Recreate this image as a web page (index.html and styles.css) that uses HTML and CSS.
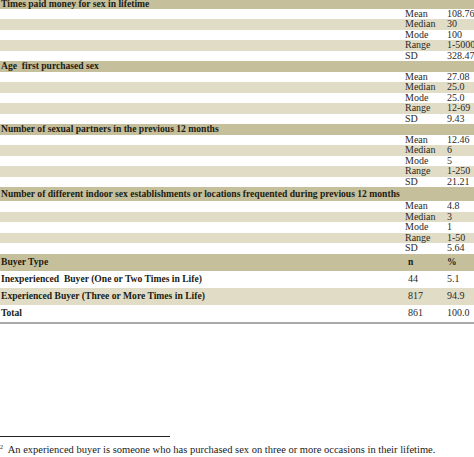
FILE: index.html
```html
<!DOCTYPE html>
<html>
<head>
<meta charset="utf-8">
<link rel="stylesheet" href="styles.css">
</head>
<body>
<div class="page">
  <div class="table">
    <div class="row head first"><span class="c1">Times paid money for sex in lifetime</span></div>
    <div class="row"><span class="c1"></span><span class="c2">Mean</span><span class="c3">108.76</span></div>
    <div class="row alt"><span class="c1"></span><span class="c2">Median</span><span class="c3">30</span></div>
    <div class="row"><span class="c1"></span><span class="c2">Mode</span><span class="c3">100</span></div>
    <div class="row alt"><span class="c1"></span><span class="c2">Range</span><span class="c3">1-5000</span></div>
    <div class="row"><span class="c1"></span><span class="c2">SD</span><span class="c3">328.47</span></div>

    <div class="row head"><span class="c1">Age&nbsp; first purchased sex</span></div>
    <div class="row"><span class="c1"></span><span class="c2">Mean</span><span class="c3">27.08</span></div>
    <div class="row alt"><span class="c1"></span><span class="c2">Median</span><span class="c3">25.0</span></div>
    <div class="row"><span class="c1"></span><span class="c2">Mode</span><span class="c3">25.0</span></div>
    <div class="row alt"><span class="c1"></span><span class="c2">Range</span><span class="c3">12-69</span></div>
    <div class="row"><span class="c1"></span><span class="c2">SD</span><span class="c3">9.43</span></div>

    <div class="row head"><span class="c1">Number of sexual partners in the previous 12 months</span></div>
    <div class="row"><span class="c1"></span><span class="c2">Mean</span><span class="c3">12.46</span></div>
    <div class="row alt"><span class="c1"></span><span class="c2">Median</span><span class="c3">6</span></div>
    <div class="row"><span class="c1"></span><span class="c2">Mode</span><span class="c3">5</span></div>
    <div class="row alt"><span class="c1"></span><span class="c2">Range</span><span class="c3">1-250</span></div>
    <div class="row"><span class="c1"></span><span class="c2">SD</span><span class="c3">21.21</span></div>

    <div class="row head tall"><span class="c1 wide">Number of different indoor sex establishments or locations frequented during previous 12 months</span></div>
    <div class="row"><span class="c1"></span><span class="c2">Mean</span><span class="c3">4.8</span></div>
    <div class="row alt"><span class="c1"></span><span class="c2">Median</span><span class="c3">3</span></div>
    <div class="row"><span class="c1"></span><span class="c2">Mode</span><span class="c3">1</span></div>
    <div class="row alt"><span class="c1"></span><span class="c2">Range</span><span class="c3">1-50</span></div>
    <div class="row"><span class="c1"></span><span class="c2">SD</span><span class="c3">5.64</span></div>

    <div class="row head buyer"><span class="c1">Buyer Type</span><span class="c2 num">n</span><span class="c3">%</span></div>
    <div class="row buyer bold"><span class="c1">Inexperienced&nbsp; Buyer (One or Two Times in Life)</span><span class="c2 num reg">44</span><span class="c3 reg">5.1</span></div>
    <div class="row buyer bold alt"><span class="c1">Experienced Buyer (Three or More Times in Life)</span><span class="c2 num reg">817</span><span class="c3 reg">94.9</span></div>
    <div class="row buyer bold last"><span class="c1">Total</span><span class="c2 num reg">861</span><span class="c3 reg">100.0</span></div>
  </div>

  <div class="footnotes">
    <div class="rule"></div>
    <p class="note"><sup>2</sup>&nbsp; An experienced buyer is someone who has purchased sex on three or more occasions in their lifetime.</p>
  </div>
</div>
</body>
</html>
```

FILE: styles.css
```css
html, body {
  margin: 0;
  padding: 0;
  background: #ffffff;
}

body {
  width: 474px;
  height: 457px;
  overflow: hidden;
  font-family: "Liberation Serif", "Times New Roman", serif;
  color: #2a2a2a;
}

.page {
  display: flex;
  flex-direction: column;
  height: 457px;
}

.table {
  margin-top: -1px;
  width: 474px;
  display: flex;
  flex-direction: column;
  overflow: hidden;
}

.row {
  display: flex;
  align-items: center;
  height: 10.5px;
  font-size: 10px;
  line-height: 10px;
  white-space: nowrap;
  background: #ffffff;
}

.row.alt {
  background: #e1dcc6;
}

.row.head {
  background: #c5bf9b;
  font-weight: bold;
  font-size: 9.6px;
  color: #1c1c14;
}

.row.first {
  height: 9.5px;
}

.row.tall {
  height: 14px;
}

.row.buyer {
  height: 17px;
}

.row.bold .c1 {
  font-weight: bold;
  font-size: 9.6px;
  color: #1c1c14;
}

.row.last {
  border-bottom: 2px solid #a9a9a9;
}

.c1 {
  width: 405px;
  flex: none;
  padding-left: 1px;
  box-sizing: border-box;
}

.c1.wide {
  width: auto;
}

.c2 {
  width: 42px;
  flex: none;
}

.c2.num {
  padding-left: 3px;
  box-sizing: border-box;
}

.c3 {
  flex: 1;
}

.reg {
  font-weight: normal;
}

.footnotes {
  margin-top: auto;
  padding-bottom: 1px;
}

.rule {
  width: 170px;
  height: 1px;
  background: #222;
}

.note {
  margin: 7px 0 0 0;
  font-size: 10.5px;
  line-height: 12px;
  color: #1a1a1a;
  white-space: nowrap;
}

.note sup {
  font-size: 6px;
  vertical-align: 4px;
  line-height: 0;
}
```
